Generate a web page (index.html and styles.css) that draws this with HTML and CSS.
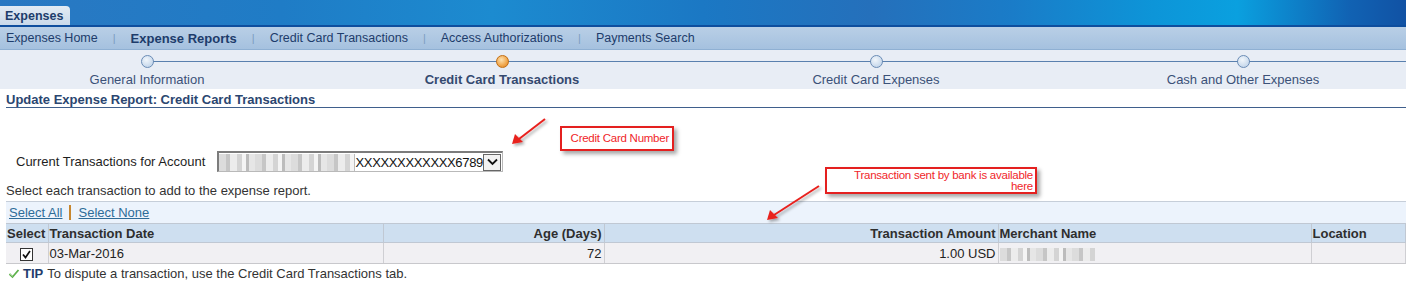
FILE: index.html
```html
<!DOCTYPE html>
<html lang="en">
<head>
    <meta charset="UTF-8">
    <title>Update Expense Report: Credit Card Transactions</title>
    <link rel="stylesheet" href="styles.css">
</head>
<body>
    <!-- Branding / tab strip -->
    <div class="banner">
        <div class="tab">Expenses</div>
    </div>

    <!-- Sub navigation -->
    <ul class="subnav">
        <li><a href="#">Expenses Home</a></li>
        <li class="sep">|</li>
        <li><a href="#" class="current">Expense Reports</a></li>
        <li class="sep">|</li>
        <li><a href="#">Credit Card Transactions</a></li>
        <li class="sep">|</li>
        <li><a href="#">Access Authorizations</a></li>
        <li class="sep">|</li>
        <li><a href="#">Payments Search</a></li>
    </ul>

    <!-- Train (process steps) -->
    <div class="train">
        <div class="stop stop-1">
            <span class="dot"></span>
            <span class="stop-label">General Information</span>
        </div>
        <div class="stop stop-2 active">
            <span class="dot"></span>
            <span class="stop-label">Credit Card Transactions</span>
        </div>
        <div class="stop stop-3">
            <span class="dot"></span>
            <span class="stop-label">Credit Card Expenses</span>
        </div>
        <div class="stop stop-4">
            <span class="dot"></span>
            <span class="stop-label">Cash and Other Expenses</span>
        </div>
    </div>

    <h1 class="page-title">Update Expense Report: Credit Card Transactions</h1>

    <div class="content">
        <div class="account-row">
            <label>Current Transactions for Account</label>
            <div class="choice">
                <span class="blurred"></span>
                <span class="card-no">XXXXXXXXXXXX6789</span>
                <span class="drop-btn">
                    <svg width="11" height="8" viewBox="0 0 11 8"><polyline points="1,1.5 5.5,6 10,1.5" fill="none" stroke="#111" stroke-width="1.8"/></svg>
                </span>
            </div>
        </div>

        <p class="instruction">Select each transaction to add to the expense report.</p>

        <div class="select-bar">
            <a href="#">Select All</a>
            <span class="bar-sep"></span>
            <a href="#">Select None</a>
        </div>

        <table class="txn-table">
            <colgroup>
                <col style="width: 42px">
                <col style="width: 335px">
                <col style="width: 221px">
                <col style="width: 394px">
                <col style="width: 313px">
                <col>
            </colgroup>
            <thead>
                <tr>
                    <th>Select</th>
                    <th>Transaction Date</th>
                    <th class="num">Age (Days)</th>
                    <th class="num">Transaction Amount</th>
                    <th>Merchant Name</th>
                    <th>Location</th>
                </tr>
            </thead>
            <tbody>
                <tr>
                    <td class="check-cell">
                        <span class="checkbox">
                            <svg width="11" height="11" viewBox="0 0 11 11"><polyline points="2,5.5 4.5,8.5 9,2" fill="none" stroke="#111" stroke-width="1.7"/></svg>
                        </span>
                    </td>
                    <td>03-Mar-2016</td>
                    <td class="num">72</td>
                    <td class="num">1.00 USD</td>
                    <td><span class="blurred merchant"></span></td>
                    <td></td>
                </tr>
            </tbody>
        </table>

        <p class="tip">
            <svg class="tip-icon" width="12" height="11" viewBox="0 0 12 11"><path d="M1.5 6 L4.5 9 L10.5 2" fill="none" stroke="#5db14a" stroke-width="1.8"/><path d="M1.5 5.5 L4.5 8.3" fill="none" stroke="#cde8c4" stroke-width="0.7"/></svg>
            <strong>TIP</strong> To dispute a transaction, use the Credit Card Transactions tab.
        </p>
    </div>

    <!-- Screenshot annotations -->
    <div class="note note-card">Credit Card Number</div>
    <div class="note note-bank">Transaction sent by bank is available<br>here</div>
    <svg class="arrows" width="1406" height="293" viewBox="0 0 1406 293">
        <defs>
            <filter id="shade" x="-20%" y="-20%" width="160%" height="160%">
                <feDropShadow dx="2" dy="2" stdDeviation="1.5" flood-color="#000" flood-opacity="0.35"/>
            </filter>
        </defs>
        <g filter="url(#shade)" stroke="#e8201f" fill="#e8201f">
            <line x1="545" y1="119" x2="519" y2="139" stroke-width="2"/>
            <polygon points="512,144 515,134 523,142" stroke="none"/>
            <line x1="819" y1="186" x2="774" y2="215" stroke-width="2"/>
            <polygon points="767,220 770,210 778,218" stroke="none"/>
        </g>
    </svg>
</body>
</html>
```

FILE: styles.css
```css
body {
    font-family: "Liberation Sans", Arial, sans-serif;
    font-size: 13px;
    color: #222;
    margin: 0;
    padding: 0;
    position: relative;
    overflow: hidden;
}

/* Banner */
.banner {
    height: 25px;
    display: flex;
    align-items: flex-end;
    background: linear-gradient(90deg, #2a78c2 0%, #1f7cc6 20%, #1c8bd0 35%, #1b78c4 50%, #2570bb 62%, #1a7cc8 72%, #0d95d8 82%, #0aa0df 88%, #1162b3 96%, #1152a4 100%);
    border-bottom: 2px solid #0e4e9e;
}

.banner .tab {
    background: linear-gradient(#e3ebf4, #c9d9ea);
    color: #1d3c6b;
    font-weight: bold;
    font-size: 12.5px;
    height: 19px;
    line-height: 20px;
    padding: 0 7px 0 5px;
    border-top-right-radius: 4px;
}

/* Sub navigation */
.subnav {
    list-style: none;
    margin: 0;
    padding: 0 0 0 6px;
    height: 22px;
    display: flex;
    align-items: center;
    gap: 15px;
    background: linear-gradient(#b9cfe6, #a5c1df);
    border-bottom: 1px solid #8fb0d3;
    font-size: 12.5px;
}

.subnav a {
    color: #1d3c6b;
    text-decoration: none;
}

.subnav a.current {
    font-weight: bold;
    font-size: 13px;
}

.subnav .sep {
    color: #7c9cc0;
    font-size: 11px;
}

/* Train */
.train {
    display: grid;
    grid-template-columns: 294px 416px 332px 1fr;
    padding-top: 5px;
    box-sizing: border-box;
    height: 39px;
    background: #e8edf5 linear-gradient(#5a80ae, #5a80ae) 147px 11px / 100% 1px no-repeat;
    overflow: hidden;
}

.stop {
    display: flex;
    flex-direction: column;
    align-items: center;
}

.stop-4 {
    width: 402px;
}

.dot {
    width: 11px;
    height: 11px;
    border-radius: 50%;
    border: 1px solid #6a8cb5;
    background: radial-gradient(circle at 40% 35%, #f1f6fb, #c8d9ec 70%);
}

.active .dot {
    border-color: #c26e12;
    background: radial-gradient(circle at 40% 35%, #fde2b0, #f0a54a 60%, #d98020);
}

.stop-label {
    margin-top: 4px;
    font-size: 13px;
    line-height: 15px;
    color: #3b5178;
}

.active .stop-label {
    font-weight: bold;
    color: #34496f;
}

/* Page title */
.page-title {
    margin: 0 0 0 6px;
    padding-top: 4px;
    font-size: 13px;
    line-height: 14px;
    height: 14px;
    color: #2b4670;
    border-bottom: 1px solid #3f5f8c;
}

.content {
    padding-left: 6px;
}

/* Account chooser */
.account-row {
    margin-top: 43px;
    padding-left: 10px;
    display: flex;
    align-items: center;
    gap: 12px;
    height: 21px;
    color: #1e1e1e;
}

.choice {
    display: flex;
    align-items: center;
    width: 286px;
    height: 21px;
    box-sizing: border-box;
    border: 1px solid #b9b9b9;
    border-top: 2px solid #7c7c7c;
    border-left: 2px solid #7c7c7c;
    background: #fff;
}

.blurred {
    display: inline-block;
    height: 13px;
    background:
        repeating-linear-gradient(90deg, #dcdcdc 0 7px, #c6c6c6 7px 11px, #ececec 11px 18px, #d4d4d4 18px 23px, #f4f4f4 23px 27px, #bcbcbc 27px 30px, #e6e6e6 30px 36px);
    filter: blur(0.7px);
}

.choice .blurred {
    width: 140px;
    height: 17px;
    margin-right: 1px;
}

.card-no {
    color: #111;
    letter-spacing: -0.35px;
}

.drop-btn {
    margin-left: auto;
    margin-right: 1px;
    width: 17px;
    height: 15px;
    border: 1px solid #666;
    background: #f2f2f2;
    display: flex;
    align-items: center;
    justify-content: center;
}

.instruction {
    margin: 12px 0 0;
    line-height: 14px;
    color: #333;
}

/* Select all / none */
.select-bar {
    margin-top: 3px;
    height: 21px;
    display: flex;
    align-items: center;
    gap: 7px;
    padding-left: 3px;
    background: #ecf3fc;
    border-top: 1px solid #c6ced9;
}

.select-bar a {
    color: #2e6c98;
}

.bar-sep {
    width: 2px;
    height: 15px;
    background: #c7862e;
}

/* Transactions table */
.txn-table {
    width: 1400px;
    table-layout: fixed;
    border-collapse: collapse;
}

.txn-table th {
    background: #cedff0;
    color: #2e2e2e;
    text-align: left;
    font-size: 13px;
    height: 18px;
    padding: 0 2px 0 1px;
    border-top: 1px solid #c0c8d3;
    border-bottom: 1px solid #c0c8d3;
    border-right: 1px solid #c0c8d3;
    white-space: nowrap;
}

.txn-table td {
    background: #f1f0f3;
    height: 20px;
    padding: 0 2px 0 1px;
    border-bottom: 1px solid #c8c8cc;
    border-right: 1px solid #cfcfd3;
    color: #222;
}

.txn-table .num {
    text-align: right;
}

.check-cell {
    text-align: center;
}

.checkbox {
    display: inline-flex;
    align-items: center;
    justify-content: center;
    width: 11px;
    height: 11px;
    border: 1px solid #333;
    background: #fff;
    vertical-align: middle;
}

.merchant {
    width: 95px;
    vertical-align: middle;
}

/* Tip */
.tip {
    margin: 2px 0 0;
    line-height: 15px;
    color: #333;
    display: flex;
    align-items: center;
    gap: 3px;
}

.tip strong {
    color: #1f3c6c;
    margin-right: 1px;
}

.tip-icon {
    margin-left: 2px;
}

/* Annotations laid over the screenshot */
.note {
    position: absolute;
    background: #fff;
    border: 2px solid #e4201f;
    box-shadow: 3px 3px 4px rgba(0, 0, 0, 0.35);
    color: #f0262a;
    font-size: 11.5px;
    letter-spacing: -0.25px;
    text-align: right;
    box-sizing: border-box;
}

.note-card {
    left: 560px;
    top: 126px;
    width: 114px;
    height: 25px;
    line-height: 21px;
    padding-right: 3px;
}

.note-bank {
    left: 825px;
    top: 167px;
    width: 212px;
    height: 27px;
    line-height: 11px;
    padding: 1px 2px 0 0;
}

.arrows {
    position: absolute;
    left: 0;
    top: 0;
    pointer-events: none;
}
```
